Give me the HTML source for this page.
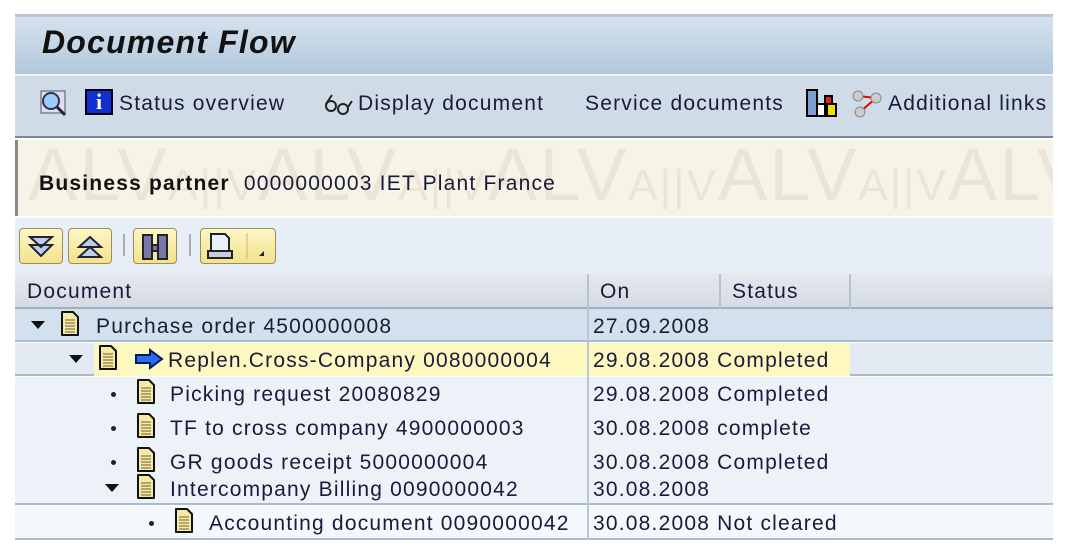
<!DOCTYPE html>
<html><head><meta charset="utf-8">
<style>
*{margin:0;padding:0;box-sizing:border-box}
body{width:1070px;height:545px;background:#fff;position:relative;overflow:hidden;font-family:"Liberation Sans",sans-serif;color:#1a1a3a}
.a{position:absolute}
.t{font-size:21px;white-space:nowrap;line-height:24px;letter-spacing:1.2px}
.doc{position:absolute;width:20px;height:26px}
.dot{position:absolute;width:5px;height:5px;background:#222;border-radius:50%}
.tri{position:absolute;width:0;height:0;border-left:7px solid transparent;border-right:7px solid transparent;border-top:8px solid #111}
.btn{position:absolute;top:228px;height:36px;background:linear-gradient(#fdf6c8,#f3e28c);border:1px solid #9a8f5a;border-radius:4px}
.wm{position:absolute;font-family:"Liberation Sans",sans-serif;color:rgba(200,175,160,0.22);white-space:nowrap;letter-spacing:2px}
</style></head><body>
<!-- title -->
<div class="a" style="left:15px;top:14px;width:1038px;height:60px;background:linear-gradient(#d5e2ee,#b2c8dd);border-top:3px solid #b9c6d2"></div>
<div class="a" style="left:42px;top:22px;font-size:32px;letter-spacing:1.2px;font-weight:bold;font-style:italic;color:#111;line-height:40px">Document Flow</div>
<!-- toolbar -->
<div class="a" style="left:15px;top:74px;width:1038px;height:64px;background:#cfdce8;border-top:2px solid #eef3f8;border-bottom:2px solid #7d8893"></div>
<svg class="a" style="left:38px;top:88px" width="30" height="30" viewBox="0 0 30 30"><rect x="3" y="3" width="24" height="22" fill="#dde" stroke="#556"/><circle cx="13" cy="13" r="8" fill="#9cf" stroke="#334" stroke-width="2"/><line x1="19" y1="19" x2="27" y2="27" stroke="#223" stroke-width="3"/></svg>
<div class="a" style="left:85px;top:89px;width:28px;height:26px;background:#1030d0;border:2px solid #001;color:#fff;font:bold 22px 'Liberation Serif',serif;text-align:center;line-height:22px">i</div>
<div class="a t" style="left:119px;top:92px">Status overview</div>
<svg class="a" style="left:322px;top:92px" width="34" height="24"><circle cx="9" cy="14" r="5" fill="none" stroke="#222" stroke-width="2"/><circle cx="21" cy="17" r="5" fill="none" stroke="#222" stroke-width="2"/><path d="M4 12 L10 3 M26 15 L30 9" stroke="#222" stroke-width="2" fill="none"/></svg>
<div class="a t" style="left:358px;top:92px">Display document</div>
<div class="a t" style="left:585px;top:92px">Service documents</div>
<svg class="a" style="left:806px;top:88px" width="32" height="30"><rect x="1" y="2" width="10" height="26" fill="#7a9fd0" stroke="#000" stroke-width="2"/><rect x="11" y="16" width="8" height="12" fill="#fff" stroke="#000" stroke-width="2"/><rect x="19" y="8" width="7" height="20" fill="#e02020" stroke="#000" stroke-width="2"/><rect x="21" y="16" width="9" height="12" fill="#f0e000" stroke="#000" stroke-width="2"/></svg>
<svg class="a" style="left:850px;top:88px" width="34" height="30"><line x1="8" y1="8" x2="26" y2="10" stroke="#e00" stroke-width="2"/><line x1="26" y1="10" x2="10" y2="24" stroke="#e00" stroke-width="2"/><circle cx="8" cy="8" r="5" fill="#ccc" stroke="#888"/><circle cx="26" cy="10" r="5" fill="#ccc" stroke="#888"/><circle cx="10" cy="24" r="5" fill="#ccc" stroke="#888"/></svg>
<div class="a t" style="left:888px;top:92px">Additional links</div>
<!-- ALV header -->
<div class="a" style="left:15px;top:140px;width:1038px;height:76px;background:#f6f4e6;border-left:3px solid #888;overflow:hidden">
<div class="wm" style="left:10px;top:-8px;font-size:74px">ALV<span style="font-size:44px">A||V</span>ALV<span style="font-size:44px">A||V</span>ALV<span style="font-size:44px">A||V</span>ALV<span style="font-size:44px">A||V</span>ALV</div>
</div>
<div class="a t" style="left:39px;top:172px"><b style="color:#111">Business partner</b>&nbsp; 0000000003 IET Plant France</div>
<!-- ALV toolbar -->
<div class="a" style="left:15px;top:216px;width:1038px;height:58px;background:#e8eef6;border-top:2px solid #fff"></div>
<div class="btn" style="left:19px;width:44px"><svg width="42" height="34"><path d="M10 8 L32 8 L21 18Z M10 16 L32 16 L21 27Z" fill="#bcd0ea" stroke="#223" stroke-width="2"/></svg></div>
<div class="btn" style="left:68px;width:44px"><svg width="42" height="34"><path d="M10 18 L32 18 L21 8Z M10 28 L32 28 L21 18Z" fill="#bcd0ea" stroke="#223" stroke-width="2"/></svg></div>
<div class="a" style="left:123px;top:234px;width:2px;height:22px;background:#aab"></div>
<div class="btn" style="left:133px;width:44px"><svg width="42" height="34"><path d="M9 6h9v24h-9z M24 6h9v24h-9z M18 16h6v6h-6z" fill="#7a78a8" stroke="#222" stroke-width="2"/></svg></div>
<div class="a" style="left:189px;top:234px;width:2px;height:22px;background:#aab"></div>
<div class="btn" style="left:200px;width:76px"><svg width="74" height="34"><path d="M10 5h14l4 4v14h-18z" fill="#e8f0fa" stroke="#222" stroke-width="2"/><rect x="7" y="22" width="24" height="7" fill="#ccd" stroke="#222" stroke-width="2"/><line x1="46" y1="4" x2="46" y2="30" stroke="#c9b770"/><path d="M58 27h5v-5z" fill="#222"/></svg></div>
<!-- column header -->
<div class="a" style="left:15px;top:274px;width:1038px;height:35px;background:linear-gradient(#e4e9ee,#d4dbe2);border-bottom:2px solid #9fb0c2"></div>
<div class="a" style="left:587px;top:274px;width:2px;height:35px;background:#b8c2cc"></div>
<div class="a" style="left:719px;top:274px;width:2px;height:35px;background:#b8c2cc"></div>
<div class="a" style="left:849px;top:274px;width:2px;height:35px;background:#b8c2cc"></div>
<div class="a t" style="left:27px;top:280px">Document</div>
<div class="a t" style="left:600px;top:280px">On</div>
<div class="a t" style="left:732px;top:280px">Status</div>
<!-- rows bg -->
<div class="a" style="left:15px;top:309px;width:1038px;height:33px;background:#d3e1ee;border-bottom:2px solid #a9bbcf"></div>
<div class="a" style="left:15px;top:343px;width:1038px;height:33px;background:#e2eaf4;border-bottom:2px solid #a9bbcf"></div>
<div class="a" style="left:94px;top:343px;width:756px;height:33px;background:#fdf8c0"></div>
<div class="a" style="left:15px;top:377px;width:1038px;height:128px;background:#edf2f9;border-bottom:2px solid #a9bbcf"></div>
<div class="a" style="left:15px;top:506px;width:1038px;height:34px;background:#f4f7fb;border-bottom:2px solid #a9bbcf"></div>
<div class="a" style="left:587px;top:309px;width:2px;height:231px;background:#b8c6d6"></div>
<svg width="0" height="0" style="position:absolute"><defs><g id="d"><path d="M2 1h11l5 5v18h-16z" fill="#f6eaa8" stroke="#111" stroke-width="2" stroke-linejoin="round"/><path d="M5 9h10M5 12h10M5 15h10M5 18h10M5 21h10" stroke="#8a7c40" stroke-width="1.2"/></g></defs></svg>
<!-- rows -->
<div class="tri" style="left:31px;top:321px"></div>
<svg class="doc" style="left:60px;top:311px"><use href="#d"/></svg>
<div class="a t" style="left:96px;top:315px">Purchase order 4500000008</div>
<div class="a t" style="left:593px;top:315px">27.09.2008</div>

<div class="tri" style="left:69px;top:355px"></div>
<svg class="doc" style="left:98px;top:345px"><use href="#d"/></svg>
<svg class="a" style="left:134px;top:348px" width="30" height="22"><path d="M2 7h14v-5l12 9-12 9v-5h-14z" fill="#2a6cf0" stroke="#001a60" stroke-width="2"/></svg>
<div class="a t" style="left:168px;top:349px">Replen.Cross-Company 0080000004</div>
<div class="a t" style="left:593px;top:349px">29.08.2008 Completed</div>

<div class="dot" style="left:111px;top:392px"></div>
<svg class="doc" style="left:136px;top:379px"><use href="#d"/></svg>
<div class="a t" style="left:170px;top:383px">Picking request 20080829</div>
<div class="a t" style="left:593px;top:383px">29.08.2008 Completed</div>

<div class="dot" style="left:111px;top:426px"></div>
<svg class="doc" style="left:136px;top:413px"><use href="#d"/></svg>
<div class="a t" style="left:170px;top:417px">TF to cross company 4900000003</div>
<div class="a t" style="left:593px;top:417px">30.08.2008 complete</div>

<div class="dot" style="left:111px;top:460px"></div>
<svg class="doc" style="left:136px;top:447px"><use href="#d"/></svg>
<div class="a t" style="left:170px;top:451px">GR goods receipt 5000000004</div>
<div class="a t" style="left:593px;top:451px">30.08.2008 Completed</div>

<div class="tri" style="left:105px;top:484px"></div>
<svg class="doc" style="left:136px;top:474px"><use href="#d"/></svg>
<div class="a t" style="left:170px;top:478px">Intercompany Billing 0090000042</div>
<div class="a t" style="left:593px;top:478px">30.08.2008</div>

<div class="dot" style="left:149px;top:521px"></div>
<svg class="doc" style="left:174px;top:508px"><use href="#d"/></svg>
<div class="a t" style="left:209px;top:512px">Accounting document 0090000042</div>
<div class="a t" style="left:593px;top:512px">30.08.2008 Not cleared</div>
</body></html>
